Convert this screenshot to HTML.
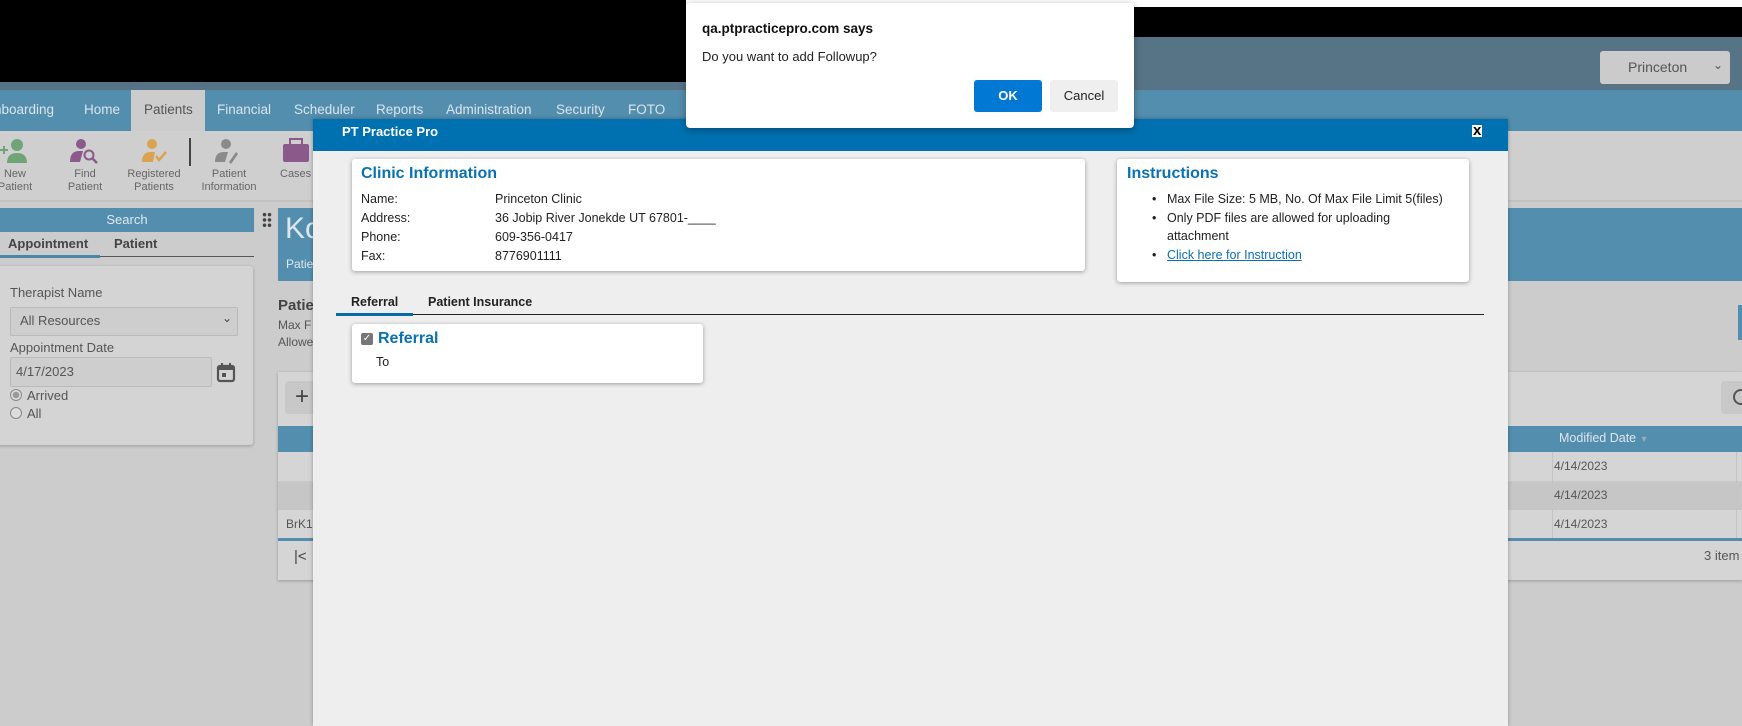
<!DOCTYPE html>
<html><head><meta charset="utf-8"><style>
*{box-sizing:border-box;margin:0;padding:0}
body{width:1742px;height:726px;overflow:hidden;position:relative;background:#cccccc;font-family:"Liberation Sans",sans-serif;font-size:13px;color:#333}
.a{position:absolute;white-space:nowrap}
.nav{font-size:13.5px;color:#d8e4ec;top:102px}
.tb{font-size:11px;color:#666;text-align:center;line-height:13px;top:168px}
.card{background:#fff;border-radius:3px;box-shadow:0 1px 4px rgba(0,0,0,.35)}
.ci{font-size:12.5px;color:#222}
</style></head><body>
<!-- top black / header -->
<div class="a" style="left:0;top:0;width:1742px;height:7px;background:#fff"></div>
<div class="a" style="left:0;top:7px;width:1742px;height:30px;background:#000"></div>
<div class="a" style="left:0;top:37px;width:1742px;height:53px;background:#577487"></div>
<div class="a" style="left:0;top:0;width:686px;height:82px;background:#000"></div>
<div class="a" style="left:1600px;top:51px;width:130px;height:33px;background:#cbcbcb;border-radius:3px"></div>
<div class="a" style="left:1628px;top:59px;font-size:14px;color:#555">Princeton</div>
<div class="a" style="left:1713px;top:58px;font-size:12px;color:#555">&#8964;</div>
<!-- nav -->
<div class="a" style="left:0;top:90px;width:1742px;height:41px;background:#548eae"></div>
<div class="a" style="left:131px;top:90px;width:74px;height:41px;background:#cccccc"></div>
<div class="a nav" style="left:-6px">nboarding</div>
<div class="a nav" style="left:84px">Home</div>
<div class="a nav" style="left:144px;color:#555">Patients</div>
<div class="a nav" style="left:217px">Financial</div>
<div class="a nav" style="left:294px">Scheduler</div>
<div class="a nav" style="left:376px">Reports</div>
<div class="a nav" style="left:446px">Administration</div>
<div class="a nav" style="left:556px">Security</div>
<div class="a nav" style="left:628px">FOTO</div>
<!-- toolbar -->
<div class="a" style="left:0;top:131px;width:1742px;height:71px;background:#cfcfcf;border-bottom:2px solid #c2c2c2"></div>
<svg class="a" style="left:0;top:138px" width="320" height="28">
<g fill="#6fa477"><circle cx="17" cy="7" r="6"/><path d="M7 25 q0-10 10-10 q10 0 10 10z"/><rect x="0" y="11" width="8" height="2"/><rect x="3" y="8" width="2" height="8"/></g>
<g fill="#8b5a8b"><circle cx="81" cy="6" r="5"/><path d="M70 24 q0-11 9-11 l4 0 l-3 11z"/><circle cx="89" cy="17" r="4.5" fill="none" stroke="#8b5a8b" stroke-width="2"/><path d="M92 20 l5 5" stroke="#8b5a8b" stroke-width="2.5"/></g>
<g fill="#d9a34f"><circle cx="152" cy="6" r="5"/><path d="M142 24 q0-10 9-10 l4 0 l-2 10z"/><path d="M156 18 l3 4 l7-8" stroke="#d9a34f" stroke-width="2.5" fill="none"/></g>
<rect x="189" y="-7" width="2" height="66" fill="#444"/>
<g fill="#8a8a8a"><circle cx="226" cy="6" r="5"/><path d="M215 24 q0-10 9-10 l4 0 l-3 10z"/><path d="M229 24 l7-10 l2 2 l-7 10z"/></g>
<g fill="#8b5a8b"><rect x="283" y="6" width="26" height="18" rx="2"/><rect x="290" y="1" width="12" height="6" fill="none" stroke="#8b5a8b" stroke-width="2"/></g>
</svg>
<div class="a tb" style="left:-8px;width:46px">New<br>Patient</div>
<div class="a tb" style="left:62px;width:46px">Find<br>Patient</div>
<div class="a tb" style="left:124px;width:60px">Registered<br>Patients</div>
<div class="a tb" style="left:198px;width:62px">Patient<br>Information</div>
<div class="a tb" style="left:280px;top:168px;width:40px;text-align:left">Cases</div>
<!-- left panel -->
<div class="a" style="left:0;top:208px;width:254px;height:24px;background:#548eae;color:#dfe8ef;text-align:center;line-height:24px;font-size:13px">Search</div>
<div class="a" style="left:262px;top:212px;width:10px;height:16px;background:radial-gradient(circle,#444 1.6px,transparent 2px) 0 0/5px 5.3px"></div>
<div class="a" style="left:8px;top:236px;font-weight:bold;font-size:13px;color:#444">Appointment</div>
<div class="a" style="left:114px;top:236px;font-weight:bold;font-size:13px;color:#444">Patient</div>
<div class="a" style="left:0;top:256px;width:254px;height:1px;background:#555"></div>
<div class="a" style="left:0;top:255px;width:100px;height:3px;background:#4a86a8"></div>
<div class="a" style="left:-4px;top:266px;width:257px;height:179px;background:#d4d4d4;border-radius:3px;box-shadow:0 1px 3px rgba(0,0,0,.25)"></div>
<div class="a" style="left:10px;top:285px;font-size:13px;color:#555">Therapist Name</div>
<div class="a" style="left:10px;top:307px;width:228px;height:29px;border:1px solid #bbb;background:#cecece;border-radius:2px"></div>
<div class="a" style="left:20px;top:313px;font-size:13px;color:#555">All Resources</div>
<div class="a" style="left:222px;top:311px;font-size:12px;color:#444">&#8964;</div>
<div class="a" style="left:10px;top:340px;font-size:13px;color:#555">Appointment Date</div>
<div class="a" style="left:10px;top:357px;width:202px;height:30px;border:1px solid #bbb;background:#cecece;border-radius:2px"></div>
<div class="a" style="left:16px;top:364px;font-size:13px;color:#555">4/17/2023</div>
<svg class="a" style="left:216px;top:363px" width="20" height="20"><rect x="2" y="3" width="16" height="15" rx="2" fill="none" stroke="#555" stroke-width="2.2"/><rect x="2" y="3" width="16" height="4" fill="#555"/><rect x="5" y="0" width="2" height="4" fill="#555"/><rect x="13" y="0" width="2" height="4" fill="#555"/><rect x="6" y="10" width="4" height="4" fill="#555"/></svg>
<div class="a" style="left:10px;top:389px;width:12px;height:12px;border:1px solid #888;border-radius:50%;background:radial-gradient(circle,#999 3px,#ddd 3.5px)"></div>
<div class="a" style="left:27px;top:388px;font-size:13px;color:#555">Arrived</div>
<div class="a" style="left:10px;top:407px;width:12px;height:12px;border:1px solid #888;border-radius:50%;background:#ddd"></div>
<div class="a" style="left:27px;top:406px;font-size:13px;color:#555">All</div>
<!-- main behind left -->
<div class="a" style="left:278px;top:208px;width:1464px;height:73px;background:#548eae"></div>
<div class="a" style="left:285px;top:212px;font-size:30px;color:#dde6ec">Ko</div>
<div class="a" style="left:286px;top:257px;font-size:12px;color:#dde6ec">Patie</div>
<div class="a" style="left:278px;top:297px;font-size:15px;font-weight:bold;color:#444">Patie</div>
<div class="a" style="left:278px;top:317px;font-size:12px;color:#555;line-height:17px">Max F<br>Allowe</div>
<div class="a" style="left:1738px;top:305px;width:4px;height:35px;background:#548eae"></div>
<div class="a" style="left:278px;top:372px;width:1464px;height:208px;background:#d5d5d5;box-shadow:0 1px 3px rgba(0,0,0,.25)"></div>
<div class="a" style="left:285px;top:381px;width:40px;height:33px;background:#c8c8c8;border-radius:4px;font-size:24px;color:#444;line-height:32px;padding-left:10px">+</div>
<div class="a" style="left:1721px;top:381px;width:40px;height:33px;background:#c8c8c8;border-radius:4px"></div>
<div class="a" style="left:1733px;top:389px;width:16px;height:16px;border:2px solid #555;border-radius:50%"></div>
<div class="a" style="left:278px;top:426px;width:1464px;height:26px;background:#548eae"></div>
<div class="a" style="left:1559px;top:431px;font-size:12.5px;color:#dde6ec">Modified Date <span style="color:#9ab;font-size:9px">&#9660;</span></div>
<div class="a" style="left:278px;top:481px;width:1464px;height:29px;background:#c6c6c6"></div>
<div class="a" style="left:278px;top:481px;width:1464px;height:1px;background:#c9c9c9"></div>
<div class="a" style="left:1552px;top:452px;width:1px;height:86px;background:#c4c4c4"></div>
<div class="a" style="left:1736px;top:452px;width:1px;height:86px;background:#c4c4c4"></div>
<div class="a" style="left:1554px;top:459px;font-size:12px;color:#555">4/14/2023</div>
<div class="a" style="left:1554px;top:488px;font-size:12px;color:#555">4/14/2023</div>
<div class="a" style="left:1554px;top:517px;font-size:12px;color:#555">4/14/2023</div>
<div class="a" style="left:286px;top:517px;font-size:12px;color:#555">BrK1</div>
<div class="a" style="left:278px;top:538px;width:1464px;height:3px;background:#548eae"></div>
<div class="a" style="left:294px;top:548px;font-size:15px;color:#444">|&lt;</div>
<div class="a" style="left:1704px;top:548px;font-size:13px;color:#555">3 item</div>
<!-- modal -->
<div class="a" style="left:313px;top:119px;width:1195px;height:607px;background:#eeeeee;box-shadow:0 0 4px rgba(0,0,0,.3)"></div>
<div class="a" style="left:313px;top:119px;width:1195px;height:32px;background:#0071b0"></div>
<div class="a" style="left:342px;top:124px;font-weight:bold;font-size:13px;color:#fff">PT Practice Pro</div>
<div class="a" style="left:1472px;top:125px;font-weight:bold;font-size:15px;color:#000;background:#fff;line-height:12px;padding:0 1px">x</div>
<div class="a card" style="left:352px;top:159px;width:733px;height:112px"></div>
<div class="a" style="left:361px;top:165px;font-size:16px;font-weight:bold;color:#0a72b0">Clinic Information</div>
<div class="a ci" style="left:361px;top:190px;line-height:19px">Name:<br>Address:<br>Phone:<br>Fax:</div>
<div class="a ci" style="left:495px;top:190px;line-height:19px">Princeton Clinic<br>36 Jobip River Jonekde UT 67801-____<br>609-356-0417<br>8776901111</div>
<div class="a card" style="left:1117px;top:159px;width:352px;height:123px"></div>
<div class="a" style="left:1127px;top:165px;font-size:16px;font-weight:bold;color:#0a72b0">Instructions</div>
<div class="a ci" style="left:1152px;top:190px;line-height:18.5px">&#8226;<br>&#8226;<br><br>&#8226;</div>
<div class="a ci" style="left:1167px;top:190px;line-height:18.5px">Max File Size: 5 MB, No. Of Max File Limit 5(files)<br>Only PDF files are allowed for uploading<br>attachment<br><span style="color:#0a72b0;text-decoration:underline">Click here for Instruction</span></div>
<div class="a" style="left:351px;top:295px;font-weight:bold;font-size:12.5px;color:#222">Referral</div>
<div class="a" style="left:428px;top:295px;font-weight:bold;font-size:12.5px;color:#222">Patient Insurance</div>
<div class="a" style="left:336px;top:314px;width:1148px;height:1px;background:#222"></div>
<div class="a" style="left:336px;top:313px;width:77px;height:3px;background:#0a6aa8"></div>
<div class="a card" style="left:352px;top:324px;width:351px;height:59px"></div>
<div class="a" style="left:361px;top:333px;width:12px;height:12px;background:#777;border-radius:2px;color:#fff;font-size:10px;line-height:12px;text-align:center">&#10003;</div>
<div class="a" style="left:378px;top:330px;font-size:16px;font-weight:bold;color:#0a72b0">Referral</div>
<div class="a ci" style="left:376px;top:355px">To</div>
<!-- dialog -->
<div class="a" style="left:686px;top:3px;width:448px;height:125px;background:#fff;border-radius:4px;box-shadow:0 2px 8px rgba(0,0,0,.35)"></div>
<div class="a" style="left:702px;top:21px;font-weight:bold;font-size:13.5px;color:#111">qa.ptpracticepro.com says</div>
<div class="a" style="left:702px;top:49px;font-size:13px;color:#222">Do you want to add Followup?</div>
<div class="a" style="left:974px;top:80px;width:68px;height:32px;background:#0078d4;border-radius:3px;color:#fff;font-weight:bold;font-size:13px;text-align:center;line-height:32px">OK</div>
<div class="a" style="left:1050px;top:80px;width:68px;height:32px;background:#efefef;border-radius:3px;color:#222;font-size:13px;text-align:center;line-height:32px">Cancel</div>
</body></html>
